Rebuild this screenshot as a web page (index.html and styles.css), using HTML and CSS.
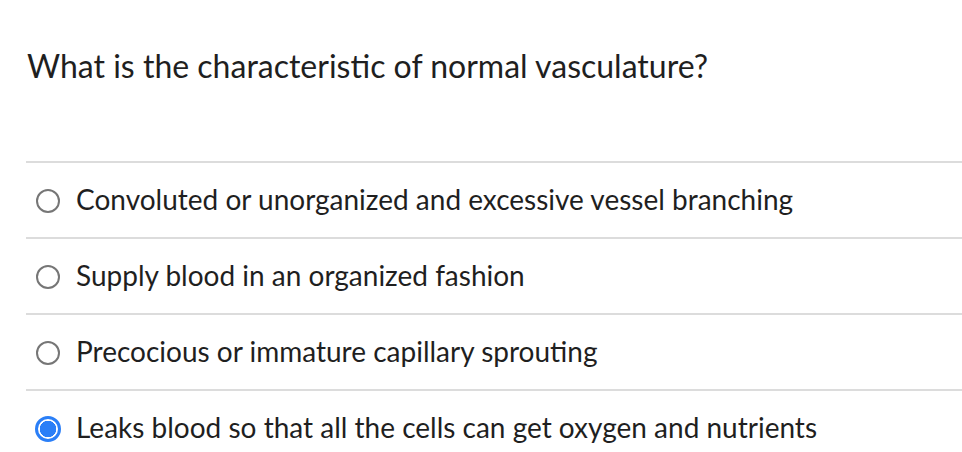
FILE: index.html
```html
<!DOCTYPE html>
<html lang="en">
<head>
<meta charset="utf-8">
<title>Quiz question</title>
<link rel="stylesheet" href="styles.css">
</head>
<body>
<div class="quiz">
  <div class="question">What is the characteristic of normal vasculature?</div>
  <div class="answers">
    <label class="answer"><span class="radio"></span><span class="answer-text">Convoluted or unorganized and excessive vessel branching</span></label>
    <label class="answer"><span class="radio"></span><span class="answer-text">Supply blood in an organized fashion</span></label>
    <label class="answer"><span class="radio"></span><span class="answer-text">Precocious or immature capillary sprouting</span></label>
    <label class="answer"><span class="radio checked"></span><span class="answer-text">Leaks blood so that all the cells can get oxygen and nutrients</span></label>
  </div>
</div>
</body>
</html>
```
FILE: styles.css
```css
html, body {
  margin: 0;
  padding: 0;
  background: #fff;
}
body {
  font-family: Lato, "Open Sans", sans-serif;
  color: #1f1f1f;
}
.quiz {
  padding-left: 26px;
}
.question {
  font-size: 32px;
  line-height: 38px;
  padding-top: 47px;
  padding-left: 1px;
  height: 114px;
}
.answers {
  display: flex;
  flex-direction: column;
}
.answer {
  display: flex;
  align-items: center;
  gap: 16px;
  height: 74px;
  border-top: 2px solid #dcdcdc;
  padding-left: 10px;
  font-size: 28px;
}
.radio {
  width: 24px;
  height: 24px;
  box-sizing: border-box;
  border: 2px solid #767676;
  border-radius: 50%;
  flex: none;
  margin-top: 1px;
}
.radio.checked {
  width: 26px;
  height: 26px;
  margin-left: -1px;
  margin-right: -1px;
  border: 3px solid #2b7ff7;
  background: radial-gradient(circle, #2b7ff7 0 8px, #fff 8.5px);
}
.answer-text {
  line-height: 34px;
  margin-top: -2px;
}
```
